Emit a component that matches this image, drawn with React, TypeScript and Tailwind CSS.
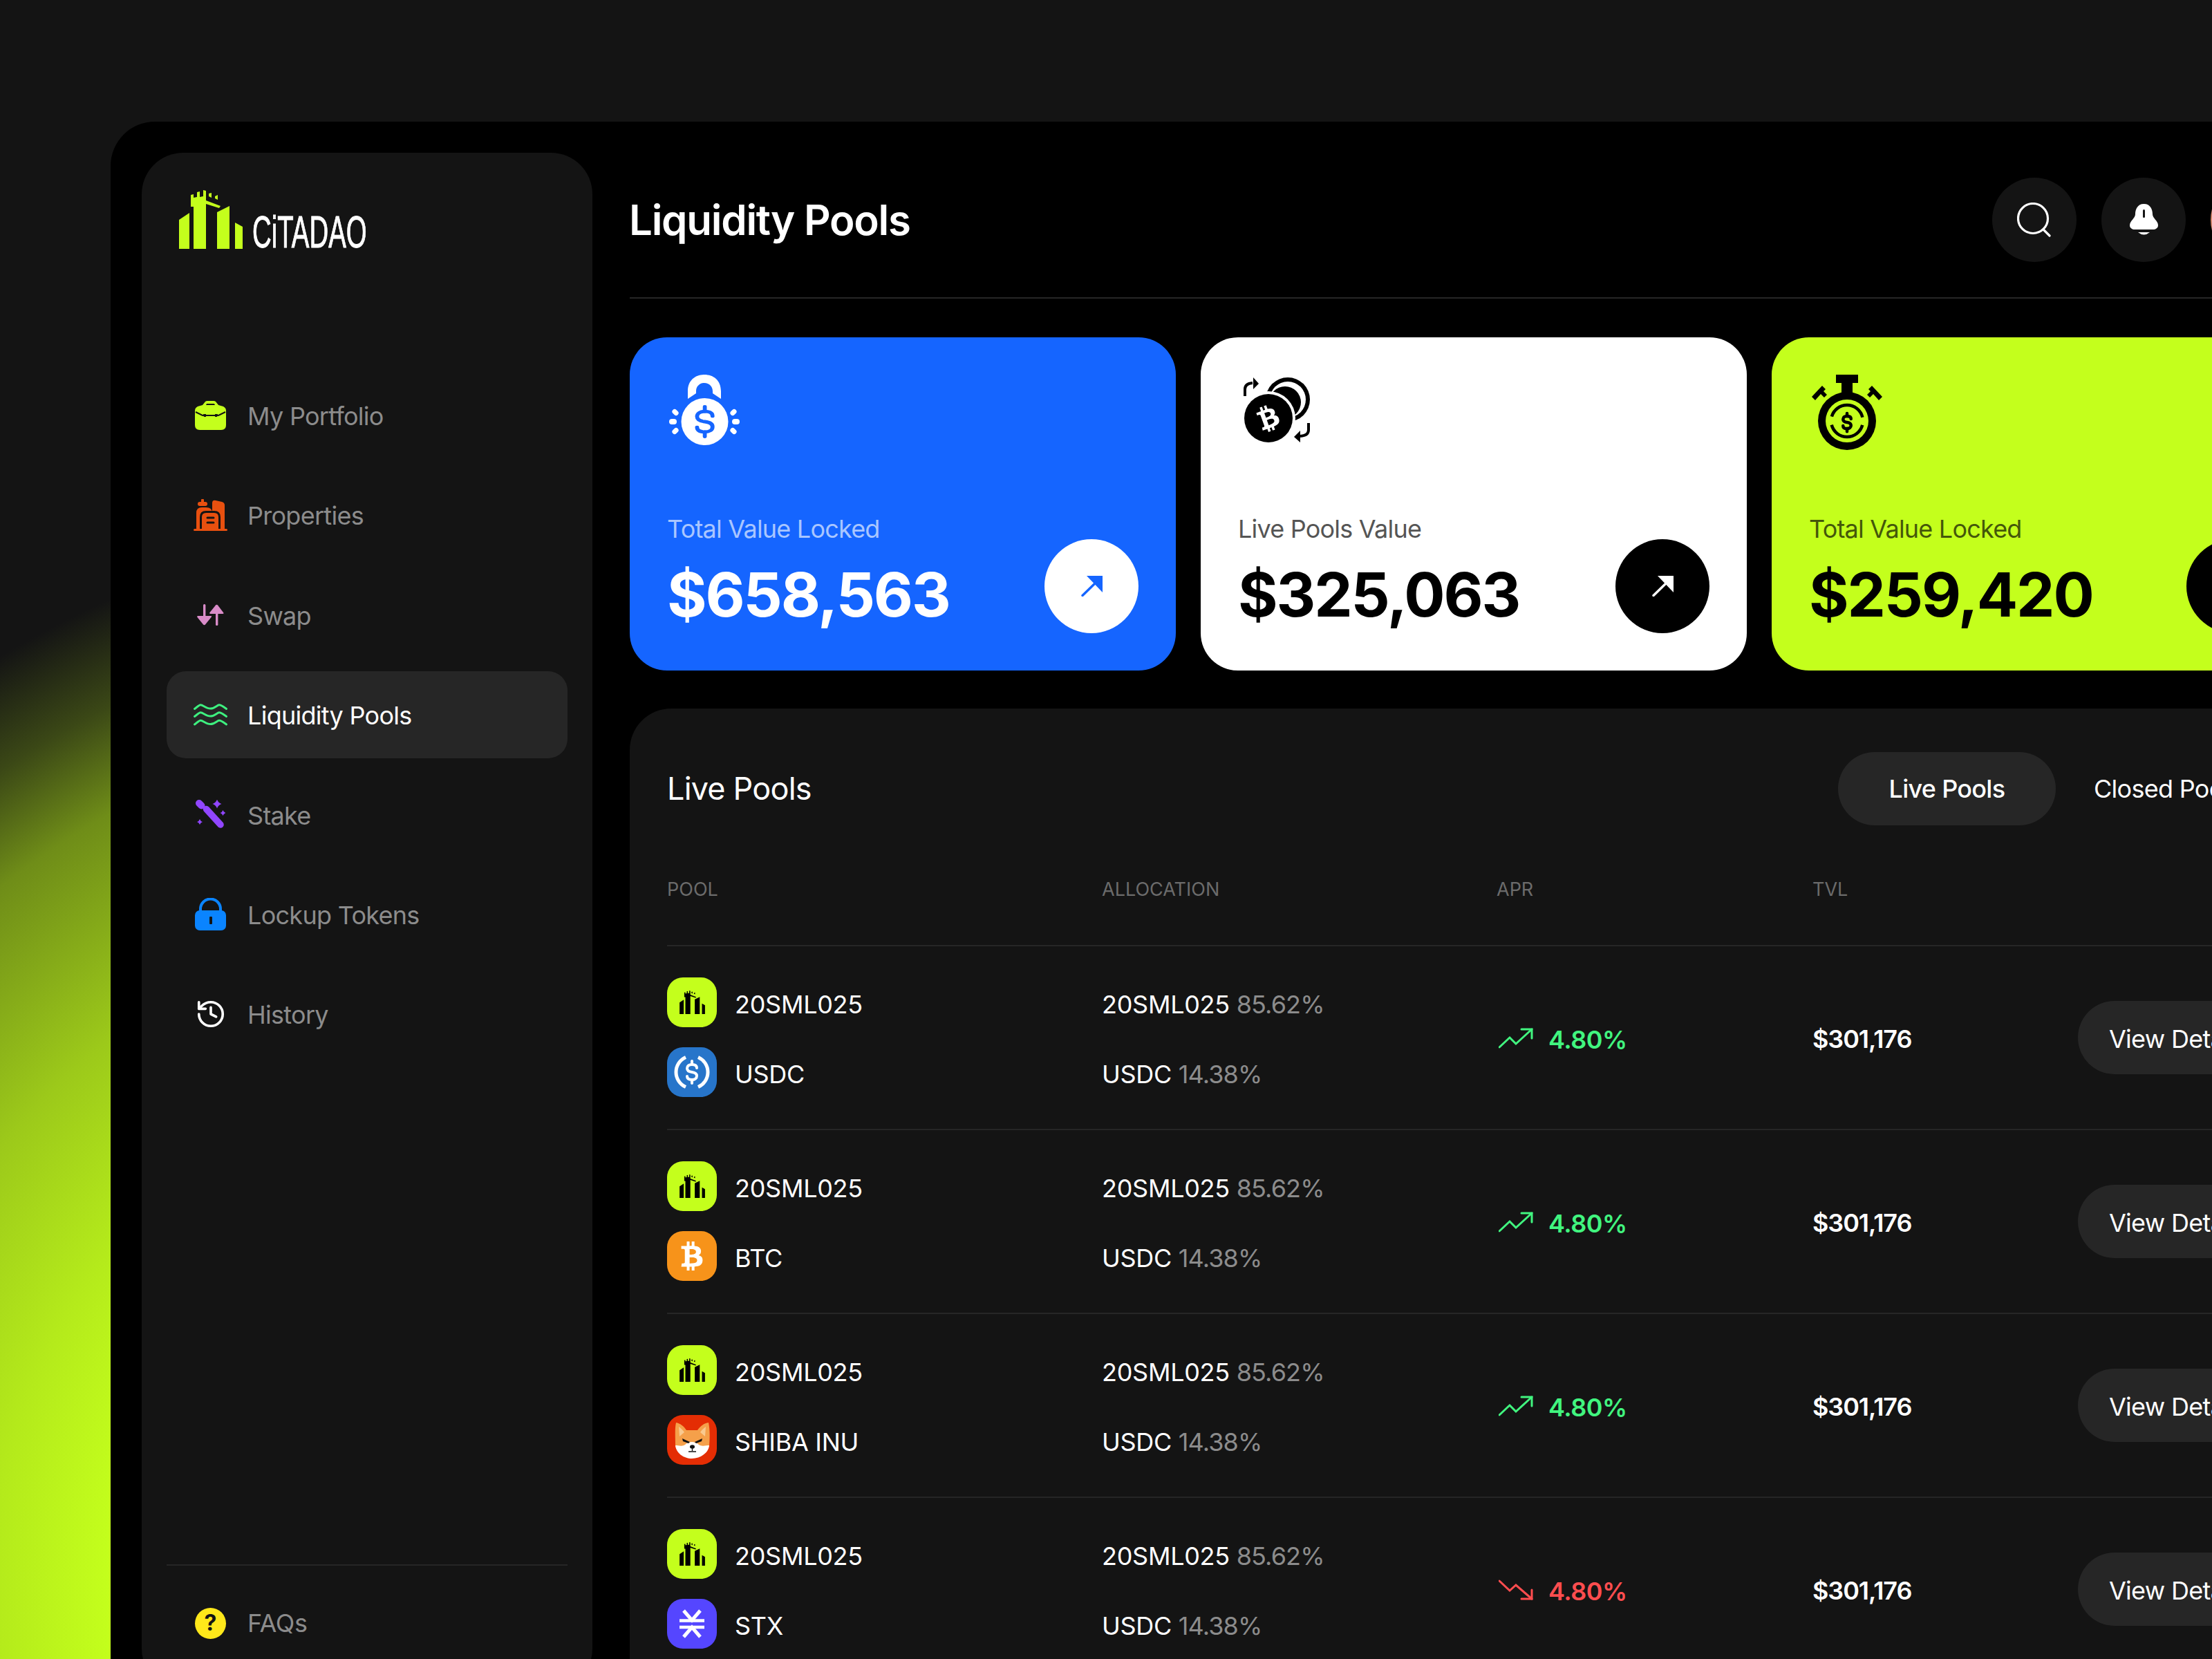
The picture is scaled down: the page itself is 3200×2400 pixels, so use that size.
import React from "react";
import { History } from "lucide-react";
import { FaBtc } from "react-icons/fa";

const LogoMark = ({ className }: { className: string }) => (
  <svg viewBox="0 0 92 85" fill="currentColor" className={className}>
    <path d="M0 43 15 33V85H0Z" />
    <path d="M17 7 21 6V11L26 10V3L30 2V10L35 9V0L39 1V15L60 23 58 26 39 20V85H21V24H17Z" />
    <path d="M43 5 47 4V11L43 9Z" />
    <path d="M52 9 56 7V14L52 12Z" />
    <path d="M55 32 73 23V85H55Z" />
    <path d="M81 47 92 53V85H81Z" />
  </svg>
);

const S = (p: { d: string; stroke?: string; w?: number }) => (
  <path d={p.d} fill="none" stroke={p.stroke ?? "#fff"} strokeWidth={p.w ?? 4} strokeLinecap="round" strokeLinejoin="round" />
);

const Portfolio = () => (
  <svg viewBox="0 0 45 42" className="w-[45px] h-[42px]">
    <path fill="#c4ff1c" d="M15 1Q16 0 18 0H27Q29 0 30 1L34 6 41 8Q45 10 45 14V35Q45 42 38 42H7Q0 42 0 35V14Q0 10 4 8L11 6Z" />
    <path fill="#141414" d="M17 4H28L29 6H16Z" />
    <path fill="none" stroke="#141414" strokeWidth="2" d="M1 16 11 21H34L44 16" />
    <path fill="#141414" d="M12 19h4v4h-3zM29 19h4l-1 4h-3z" />
  </svg>
);
const Properties = () => (
  <svg viewBox="0 0 49 46" className="w-[49px] h-[46px]">
    <g fill="#e8500f">
      <rect x="0" y="43" width="49" height="3" rx="1.5" />
      <rect x="11" y="0" width="4" height="6" rx="1" />
      <rect x="6" y="4" width="14" height="6" rx="3" />
      <path d="M4 44V20Q4 12 12 12H18Q27 12 27 20V44Z" />
      <path d="M27 6Q27 1 32 2L41 4Q45 5 45 9V44H27Z" />
    </g>
    <path fill="none" stroke="#141414" strokeWidth="3" d="M10.5 43V26Q10.5 18.5 18 18.5H30Q37.5 18.5 37.5 26V43" />
    <path fill="none" stroke="#141414" strokeWidth="3" strokeLinecap="round" d="M20 27H29M20 34H29" />
  </svg>
);
const Swap = () => (
  <svg viewBox="0 0 39 31" className="w-[39px] h-[31px]" fill="#d98cc8">
    <rect x="9" y="0" width="3.4" height="20" rx="1.5" />
    <path d="M1.5 17H20Q22 17 20.5 19L12 29.5Q10.5 31 9 29.5L.5 19Q-.5 17 1.5 17Z" />
    <rect x="27" y="11" width="3.4" height="20" rx="1.5" />
    <path d="M19.5 14H37Q39.5 14 38 12L30 1.5Q28.5 0 27 1.5L18.5 12Q17.5 14 19.5 14Z" />
  </svg>
);
const Waves = () => (
  <svg viewBox="0 0 49 33" className="w-[49px] h-[33px]" fill="none" stroke="#3ef07f" strokeWidth="3" strokeLinecap="round">
    <path d="M1.5 7.5C5 5 8 1.8 10 1.8 14 1.8 18 7 24.5 7 31 7 34 1.8 37 1.8 40 1.8 44 5 47.5 7.5" />
    <path d="M1.5 18.5C5 16 8 12.8 10 12.8 14 12.8 18 18 24.5 18 31 18 34 12.8 37 12.8 40 12.8 44 16 47.5 18.5" />
    <path d="M1.5 30C5 27.5 8 24.3 10 24.3 14 24.3 18 29.5 24.5 29.5 31 29.5 34 24.3 37 24.3 40 24.3 44 27.5 47.5 30" />
  </svg>
);
const Star = ({ x, y, r }: { x: number; y: number; r: number }) => (
  <path
    fill="#9146ff"
    d={`M${x} ${y - r}Q${x + r * 0.25} ${y - r * 0.25} ${x + r} ${y}Q${x + r * 0.25} ${y + r * 0.25} ${x} ${y + r}Q${x - r * 0.25} ${y + r * 0.25} ${x - r} ${y}Q${x - r * 0.25} ${y - r * 0.25} ${x} ${y - r}Z`}
  />
);
const Wand = () => (
  <svg viewBox="0 0 43 43" className="w-[43px] h-[43px]">
    <path d="M5 5 8.5 8.5" stroke="#9146ff" strokeWidth="10" strokeLinecap="round" />
    <path d="M15.5 13.5 36 36" stroke="#9146ff" strokeWidth="9.5" strokeLinecap="round" />
    <Star x={31} y={6} r={6.5} />
    <Star x={39.5} y={19} r={4} />
    <Star x={6} y={32} r={4} />
  </svg>
);
const Lock = () => (
  <svg viewBox="0 0 45 47" className="w-[45px] h-[47px]">
    <path d="M8 20V16A14.5 14.5 0 0 1 37 16V20" fill="none" stroke="#0a84ff" strokeWidth="4" />
    <rect x="0" y="18" width="45" height="29" rx="7" fill="#0a84ff" />
    <rect x="21" y="27" width="4" height="11" rx="1" fill="#141414" />
  </svg>
);
const Search = () => (
  <svg viewBox="0 0 50 50" className="w-[50px] h-[50px]" fill="none" stroke="#fff" strokeWidth="3.2" strokeLinecap="round">
    <circle cx="23" cy="23" r="21.5" />
    <path d="M38 39 47 48" />
  </svg>
);
const Bell = () => (
  <svg viewBox="0 0 41 46" className="w-[41px] h-[46px]" fill="#fff">
    <path d="M20.5 0C30 0 33 8 33 15 33 21 41 24 41 31 41 35 37 37 34 37H7C4 37 0 35 0 31 0 24 8 21 8 15 8 8 11 0 20.5 0Z" />
    <rect x="19" y="8" width="3" height="12" rx="1.5" fill="#141414" />
    <path d="M12 41H29Q20.5 48 12 41Z" />
  </svg>
);
const Arrow = ({ color }: { color: string }) => (
  <svg viewBox="0 0 31 30" className="w-[31px] h-[30px]">
    <path d="M8 0H31V24Z" fill={color} />
    <path d="M21 10 2 28.5" stroke={color} strokeWidth="3.4" strokeLinecap="round" />
  </svg>
);
const Dollar = ({ color, t, w = 4 }: { color: string; t?: string; w?: number }) => (
  <g transform={t}>
    <S stroke={color} w={w} d="M43 30C43 26 39 25 36 25 32 25 29 27 29 30.5 29 34 32 35.5 36 36 40 36.5 43 38 43 41.5 43 45 40 47 36 47 32 47 29 46 29 42" />
    <S stroke={color} w={w} d="M36 20V25M36 47V52" />
  </g>
);

const CardLock = () => (
  <svg viewBox="0 0 102 102" className="w-[102px] h-[102px]">
    <path fill="#fff" d="M27 35V24C27 8 38 0 51 0 64 0 75 8 75 24V35L63 27V24C63 17 58 12 51 12 44 12 39 17 39 24V27Z" />
    <circle cx="51.5" cy="68" r="34" fill="#fff" />
    <Dollar color="#1565ff" t="translate(-6 19.4) scale(1.6 1.35)" w={3.6} />
    <g fill="#fff">
      <rect x="0" y="64" width="11" height="8" rx="4" />
      <rect x="91" y="64" width="11" height="8" rx="4" />
      <rect x="4" y="51" width="10" height="7" rx="3.5" transform="rotate(45 9 54.5)" />
      <rect x="4" y="78" width="10" height="7" rx="3.5" transform="rotate(-45 9 81.5)" />
      <rect x="88" y="51" width="10" height="7" rx="3.5" transform="rotate(-45 93 54.5)" />
      <rect x="88" y="78" width="10" height="7" rx="3.5" transform="rotate(45 93 81.5)" />
    </g>
  </svg>
);
const CardCoins = () => (
  <svg viewBox="0 0 96 95" className="w-[96px] h-[95px]">
    <circle cx="64" cy="33" r="32" fill="#000" />
    <circle cx="64" cy="33" r="26" fill="#fff" />
    <circle cx="60" cy="37" r="23" fill="#000" />
    <circle cx="36" cy="60" r="39" fill="#fff" />
    <circle cx="36" cy="60" r="35" fill="#000" />
    <g transform="rotate(-20 36 60)">
      <FaBtc x={17} y={41} size={38} color="#fff" />
    </g>
    <path d="M2 28V18Q2 10 13 9" fill="none" stroke="#000" strokeWidth="4" />
    <path d="M14 1 22 10 14 18Z" fill="#000" />
    <path d="M94 67V77Q94 85 82 86" fill="none" stroke="#000" strokeWidth="4" />
    <path d="M82 78 73 87 82 95Z" fill="#000" />
  </svg>
);
const CardWatch = () => (
  <svg viewBox="0 0 102 110" className="w-[102px] h-[110px]">
    <g fill="#000">
      <rect x="35" y="0" width="32" height="12" />
      <rect x="43" y="12" width="16" height="14" />
      <path d="M0 32 15 16 20 21 17 24 22 29 18 33 13 28 5 37Z" />
      <path d="M102 32 87 16 82 21 85 24 80 29 84 33 89 28 97 37Z" />
      <circle cx="51" cy="67" r="42" />
    </g>
    <circle cx="51" cy="67" r="31" fill="#c4ff1c" />
    <circle cx="51" cy="67" r="23" fill="none" stroke="#000" strokeWidth="4.5" strokeDasharray="60 12.3" strokeDashoffset="-6" />
    <Dollar color="#000" t="translate(21.5 39.5) scale(.82)" w={5.5} />
  </svg>
);

const TileLogo = () => (
  <div className="w-[72px] h-[72px] rounded-[23px] bg-[#c4ff1c] flex items-center justify-center text-black">
    <LogoMark className="w-[37px] h-[34px]" />
  </div>
);
const Usdc = () => (
  <div className="w-[72px] h-[72px] rounded-[23px] bg-[#2775ca]">
    <svg viewBox="0 0 72 72" className="w-[72px] h-[72px]">
      <path d="M27 14.5A23.5 23.5 0 0 0 27 57.5M45 14.5A23.5 23.5 0 0 1 45 57.5" fill="none" stroke="#fff" strokeWidth="5" strokeLinecap="butt" />
      <Dollar color="#fff" w={4} />
    </svg>
  </div>
);
const Btc = () => (
  <div className="w-[72px] h-[72px] rounded-[23px] bg-[#f7931a] flex items-center justify-center">
    <FaBtc size={42} color="#fff" />
  </div>
);
const Shiba = () => (
  <div className="w-[72px] h-[72px] rounded-[23px] bg-[#e42d04]">
    <svg viewBox="0 0 72 72" className="w-[72px] h-[72px]">
      <path fill="#f5a04a" d="M13 11C19 12 25 17 28 22H44C47 17 53 12 60 11 62 20 62 32 61 45 56 56 46 62 36 62 26 62 16 56 12 45 12 32 11 20 13 11Z" />
      <path fill="#f9c98f" d="M17 17C20 19 23 22 25 25L18 31ZM56 17C53 19 50 22 48 25L55 31Z" />
      <path fill="#fff" d="M12 44C17 44 22 46 26 43 29 40 33 39 36 39 39 39 43 40 46 43 50 46 56 44 61 44 60 55 48 63 36 63 24 63 13 55 12 44Z" />
      <path fill="#111" d="M22 34 33 39 31 41 23 38ZM51 34 40 39 42 41 50 38Z" />
      <ellipse cx="36.5" cy="46" rx="3.5" ry="2.8" fill="#111" />
      <path d="M36.5 48V52M31 53H42" stroke="#111" strokeWidth="1.4" fill="none" />
    </svg>
  </div>
);
const Stx = () => (
  <div className="w-[72px] h-[72px] rounded-[23px] bg-[#5546ff]">
    <svg viewBox="0 0 72 72" className="w-[72px] h-[72px]" fill="none" stroke="#fff">
      <path d="M18 31.5H54M18 41H54" strokeWidth="4.5" />
      <path d="M24 17 36 31 48 17M24 55 36 41 48 55" strokeWidth="5" />
    </svg>
  </div>
);

const navItems: { label: string; icon: React.ReactNode; active?: boolean }[] = [
  { label: "My Portfolio", icon: <Portfolio /> },
  { label: "Properties", icon: <Properties /> },
  { label: "Swap", icon: <Swap /> },
  { label: "Liquidity Pools", icon: <Waves />, active: true },
  { label: "Stake", icon: <Wand /> },
  { label: "Lockup Tokens", icon: <Lock /> },
  { label: "History", icon: <History size={46} color="#fff" strokeWidth={1.9} /> },
];

const NavRow = ({ label, icon, active }: { label: string; icon: React.ReactNode; active?: boolean }) => (
  <div className={`h-[126px] rounded-[28px] flex items-center pl-[39px] ${active ? "bg-[#262626] text-white" : "text-[#8c8c8c]"}`}>
    <div className="w-[49px] flex justify-center">{icon}</div>
    <span className="ml-[29px] pt-[2px] text-[36px] leading-[44px] tracking-[-0.02em]">{label}</span>
  </div>
);

const Card = (p: {
  bg: string;
  labelColor: string;
  amountColor: string;
  btnBg: string;
  arrow: string;
  label: string;
  amount: string;
  icon: React.ReactNode;
  iconClass: string;
}) => (
  <div className={`w-[790px] h-[482px] rounded-[54px] px-[54px] pt-[54px] flex flex-col ${p.bg}`}>
    <div className={`h-[112px] flex items-start ${p.iconClass}`}>{p.icon}</div>
    <div className={`mt-[89px] text-[36px] leading-[44px] tracking-[-0.022em] ${p.labelColor}`}>{p.label}</div>
    <div className="mt-[17px] flex items-center justify-between">
      <span className={`text-[88px] leading-[108px] font-bold tracking-[-0.024em] ${p.amountColor}`}>{p.amount}</span>
      <div className={`w-[136px] h-[136px] rounded-full flex items-center justify-center -mt-[24px] ${p.btnBg}`}>
        <Arrow color={p.arrow} />
      </div>
    </div>
  </div>
);

const rows = [
  { token: "USDC", icon: <Usdc />, down: false },
  { token: "BTC", icon: <Btc />, down: false },
  { token: "SHIBA INU", icon: <Shiba />, down: false },
  { token: "STX", icon: <Stx />, down: true },
];

const gridCols = "grid grid-cols-[629px_571px_457px_384px_1fr]";

const Alloc = ({ name, pct }: { name: string; pct: string }) => (
  <div className="h-[72px] flex items-center pt-[5px] text-[36px] tracking-[-0.008em] whitespace-pre">
    <span className="text-white">{name} </span>
    <span className="text-[#8c8c8c] tracking-[-0.025em]">{pct}</span>
  </div>
);

const Row = ({ token, icon, down }: { token: string; icon: React.ReactNode; down: boolean }) => (
  <div className={`${gridCols} border-t-2 border-[#262626] pt-[45px] pb-[46px] items-center`}>
    <div className="flex flex-col gap-[29px]">
      <div className="flex items-center gap-[26px]">
        <TileLogo />
        <span className="text-[36px] text-white tracking-[-0.008em] pt-[5px]">20SML025</span>
      </div>
      <div className="flex items-center gap-[26px]">
        {icon}
        <span className="text-[36px] text-white tracking-[-0.008em] pt-[5px]">{token}</span>
      </div>
    </div>
    <div className="flex flex-col gap-[29px]">
      <Alloc name="20SML025" pct="85.62%" />
      <Alloc name="USDC" pct="14.38%" />
    </div>
    <div className={`flex items-center gap-[22px] pl-[3px] pt-[7px] ${down ? "text-[#ff4d4f]" : "text-[#41f57f]"}`}>
      <svg viewBox="0 0 50 30" className="w-[50px] h-[30px] -mt-[4px]" fill="none" stroke="currentColor" strokeWidth="3" strokeLinecap="round">
        {down ? (
          <>
            <path d="M1 2 16 16 25 8 48 28" />
            <path d="M33 28H48V15" />
          </>
        ) : (
          <>
            <path d="M1 28 16 14 25 23 48 2" />
            <path d="M33 2H48V15" />
          </>
        )}
      </svg>
      <span className="text-[36px] font-semibold tracking-[-0.015em]">4.80%</span>
    </div>
    <div className="text-[36px] font-semibold text-white tracking-[-0.03em] pt-[5px]">$301,176</div>
    <div className="h-[106px] w-[340px] rounded-full bg-[#262626] flex items-center pl-[45px] pt-[4px] text-[36px] text-white tracking-[-0.02em] whitespace-nowrap">
      View Details
    </div>
  </div>
);

export default function App() {
  return (
    <div className="relative w-[3200px] h-[2400px] overflow-hidden bg-[#141414] bg-[radial-gradient(circle_at_800px_2300px,#c4ff1c_640px,#b4ea1b_810px,#9cc91a_1024px,#6f8d18_1293px,#3b4816_1430px,#141414_1570px)] pt-[176px] pl-[160px] font-[Inter,sans-serif]">
      <div className="w-[3040px] h-[2224px] bg-black rounded-tl-[64px] p-[45px] flex gap-[54px]">
        <aside className="w-[652px] shrink-0 h-[2224px] bg-[#141414] rounded-[60px] px-[36px] flex flex-col">
          <div className="h-[317px] pt-[54px] pl-[18px] flex items-start">
            <div className="flex items-end text-[#c4ff1c]">
              <LogoMark className="w-[92px] h-[85px]" />
              <span className="ml-[14px] w-[166px] h-[47px] leading-[47px] text-[64px] text-white font-[Liberation_Sans,sans-serif] origin-left scale-x-[0.6] [-webkit-text-stroke:1px_white] whitespace-nowrap inline-block">
                CiTADAO
              </span>
            </div>
          </div>
          <nav className="flex flex-col gap-[18.4px]">
            {navItems.map((n) => (
              <NavRow key={n.label} {...n} />
            ))}
          </nav>
          <div className="mt-[733px] border-t-2 border-[#262626] pt-[20px]">
            <div className="h-[126px] flex items-center pl-[41px] text-[#8c8c8c]">
              <div className="w-[45px] h-[45px] rounded-full bg-[#ffe81a] flex items-center justify-center text-[32px] font-bold text-[#141414] leading-none">
                ?
              </div>
              <span className="ml-[31px] text-[36px] leading-[44px] tracking-[-0.01em]">FAQs</span>
            </div>
          </div>
        </aside>
        <main className="w-[2442px] shrink-0">
          <header className="h-[211px] border-b-2 border-[#262626] flex items-start justify-between pt-[36px] pr-[33px]">
            <h1 className="h-[122px] -ml-[1px] flex items-center text-[60px] font-semibold text-white tracking-[-0.021em]">Liquidity Pools</h1>
            <div className="flex gap-[36px]">
              <div className="w-[122px] h-[122px] rounded-full bg-[#141414] flex items-center justify-center">
                <Search />
              </div>
              <div className="w-[122px] h-[122px] rounded-full bg-[#141414] flex items-center justify-center">
                <Bell />
              </div>
              <div className="w-[122px] h-[122px] rounded-full bg-[#d98a6f]" />
            </div>
          </header>
          <section className="mt-[56px] flex gap-[36px]">
            <Card iconClass="ml-[3px]" bg="bg-[#1565ff]" labelColor="text-[#a9c6ff]" amountColor="text-white" btnBg="bg-white" arrow="#1565ff" label="Total Value Locked" amount="$658,563" icon={<CardLock />} />
            <Card iconClass="ml-[8px] pt-[3px]" bg="bg-white" labelColor="text-[#555555]" amountColor="text-black" btnBg="bg-black" arrow="#ffffff" label="Live Pools Value" amount="$325,063" icon={<CardCoins />} />
            <Card iconClass="ml-[4px]" bg="bg-[#c4ff1c]" labelColor="text-[#44570a]" amountColor="text-black" btnBg="bg-black" arrow="#ffffff" label="Total Value Locked" amount="$259,420" icon={<CardWatch />} />
          </section>
          <section className="mt-[55px] bg-[#141414] rounded-t-[60px] pl-[54px] h-[1400px]">
            <div className="flex items-center justify-between pt-[63px]">
              <h2 className="text-[45px] font-normal text-white tracking-[-0.018em]">Live Pools</h2>
              <div className="flex items-center mr-[54px]">
                <div className="h-[106px] w-[315px] rounded-full bg-[#262626] flex items-center justify-center text-[36px] font-medium text-white tracking-[-0.02em]">
                  Live Pools
                </div>
                <div className="pl-[55px] w-[325px] text-[36px] text-white tracking-[-0.02em] whitespace-nowrap">Closed Pools</div>
              </div>
            </div>
            <div className={`${gridCols} h-[173px] pt-[75px] text-[27px] leading-[36px] text-[#6b6b6b] uppercase`}>
              <div>Pool</div>
              <div>Allocation</div>
              <div>APR</div>
              <div>TVL</div>
              <div />
            </div>
            {rows.map((r, i) => (
              <Row key={i} {...r} />
            ))}
          </section>
        </main>
      </div>
    </div>
  );
}
